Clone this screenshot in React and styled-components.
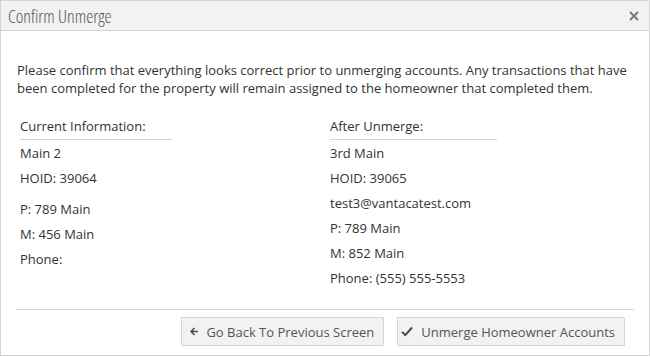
import React from "react";
import styled, { createGlobalStyle } from "styled-components";

const GlobalStyle = createGlobalStyle`
  html, body {
    margin: 0;
    padding: 0;
    background: #fff;
  }
  body {
    font-family: "Open Sans", "Liberation Sans", sans-serif;
    color: #333;
  }
`;

const Modal = styled.div`
  width: 650px;
  height: 356px;
  box-sizing: border-box;
  border: 1px solid #d4d4d4;
  display: flex;
  flex-direction: column;
  background: #fff;
`;

const Header = styled.div`
  height: 30px;
  box-sizing: border-box;
  background: #f2f2f2;
  border-bottom: 1px solid #d4d4d4;
  display: flex;
  align-items: center;
  justify-content: space-between;
  padding: 0 10px 0 7px;
`;

const Title = styled.div`
  font-size: 18px;
  font-weight: 300;
  font-stretch: 75%;
  color: #555;
`;

const Close = styled.button`
  border: none;
  background: none;
  padding: 0;
  display: flex;
  color: #777;
  cursor: pointer;
`;

const Body = styled.div`
  flex: 1;
  padding: 30px 16px 0 16px;
`;

const Intro = styled.p`
  margin: 0;
  font-size: 13px;
  line-height: 18px;
`;

const Columns = styled.div`
  display: grid;
  grid-template-columns: 310px 1fr;
  padding: 20px 3px 0 3px;
`;

const Column = styled.div`
  display: flex;
  flex-direction: column;
`;

const ColHead = styled.div`
  font-size: 13px;
  line-height: 18px;
  padding-bottom: 4px;
  border-bottom: 1px solid #d4d4d4;
  width: ${(p) => p.$w}px;
  margin-bottom: 1px;
`;

const Row = styled.div`
  font-size: 13px;
  line-height: 25px;
  min-height: ${(p) => (p.$empty ? "6px" : "25px")};
  height: ${(p) => (p.$empty ? "6px" : "auto")};
`;

const Footer = styled.div`
  margin: 0 15px;
  border-top: 1px solid #d4d4d4;
  display: flex;
  justify-content: flex-end;
  gap: 13px;
  padding: 7px 9px 9px 0;
`;

const Button = styled.button`
  height: 29px;
  box-sizing: border-box;
  background: #f2f2f2;
  border: 1px solid #d4d4d4;
  border-radius: 1px;
  font-family: "Open Sans", "Liberation Sans", sans-serif;
  font-size: 13px;
  color: #555;
  display: flex;
  align-items: center;
  gap: ${(p) => p.$gap}px;
  padding: 0 9px 0 ${(p) => p.$pl}px;
  cursor: pointer;
`;

const ArrowIcon = () => (
  <svg width="8" height="9" viewBox="0 0 8 9">
    <path d="M4 0.5 0 4.5l4 4 1-1L2.8 5.3H8V3.7H2.8L5 1.5z" fill="#444" />
  </svg>
);

const CheckIcon = () => (
  <svg width="12" height="11" viewBox="0 0 12 11">
    <path d="M1 5.8l3.3 3.3L11 1.5" fill="none" stroke="#444" strokeWidth="1.9" />
  </svg>
);

const CloseIcon = () => (
  <svg width="10" height="10" viewBox="0 0 10 10">
    <path d="M1 1l8 8M9 1L1 9" stroke="#777" strokeWidth="1.8" />
  </svg>
);

const current = ["Main 2", "HOID: 39064", "", "P: 789 Main", "M: 456 Main", "Phone:"];
const after = [
  "3rd Main",
  "HOID: 39065",
  "test3@vantacatest.com",
  "P: 789 Main",
  "M: 852 Main",
  "Phone: (555) 555-5553",
];

const App = () => {
  return (
    <>
      <GlobalStyle />
      <Modal>
        <Header>
          <Title>Confirm Unmerge</Title>
          <Close>
            <CloseIcon />
          </Close>
        </Header>
        <Body>
          <Intro>
            Please confirm that everything looks correct prior to unmerging accounts. Any
            transactions that have been completed for the property will remain assigned to the
            homeowner that completed them.
          </Intro>
          <Columns>
            <Column>
              <ColHead $w={152}>Current Information:</ColHead>
              {current.map((r, i) => (
                <Row key={i} $empty={!r}>
                  {r}
                </Row>
              ))}
            </Column>
            <Column>
              <ColHead $w={167}>After Unmerge:</ColHead>
              {after.map((r, i) => (
                <Row key={i} $empty={!r}>
                  {r}
                </Row>
              ))}
            </Column>
          </Columns>
        </Body>
        <Footer>
          <Button $pl={8} $gap={8}>
            <ArrowIcon />
            Go Back To Previous Screen
          </Button>
          <Button $pl={3} $gap={8}>
            <CheckIcon />
            Unmerge Homeowner Accounts
          </Button>
        </Footer>
      </Modal>
    </>
  );
};

export default App;
